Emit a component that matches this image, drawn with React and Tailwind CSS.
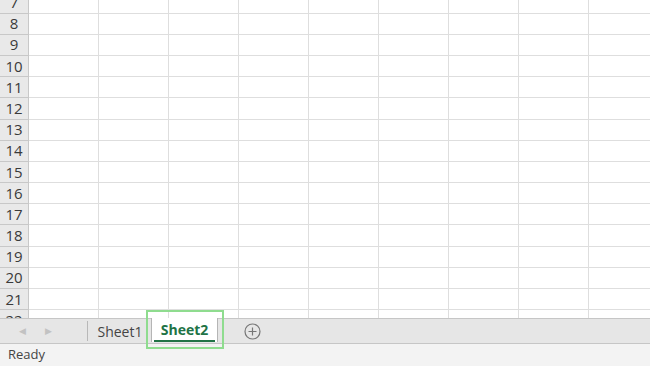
import React from "react";

const rows = [7, 8, 9, 10, 11, 12, 13, 14, 15, 16, 17, 18, 19, 20, 21, 22];
const cols = Array.from({ length: 10 });

export default function App() {
  return (
    <div className="w-[650px] h-[366px] overflow-hidden bg-white flex flex-col" style={{ fontFamily: '"Open Sans", "Noto Sans", sans-serif' }}>
      <div className="h-[318px] overflow-hidden">
        <div className="-mt-[7.6px]">
          {rows.map((r) => (
            <div key={r} className="flex h-[21.2px]">
              <div className="w-[29px] shrink-0 bg-[#e9e9e9] border-r border-b border-[#c8c8c8] flex items-center justify-center text-[15px] text-[#3a3a3a] leading-none">
                {r}
              </div>
              {cols.map((_, i) => (
                <div key={i} className="w-[70px] shrink-0 border-r border-b border-[#dedede]" />
              ))}
            </div>
          ))}
        </div>
      </div>
      <div className="h-[26px] bg-[#e6e6e6] border-t border-b border-[#c6c6c6] flex items-stretch relative">
        <div className="w-[87px] flex items-center text-[#c2c2c2] text-[9px]">
          <span className="ml-[19px]">◀</span>
          <span className="ml-[19px]">▶</span>
        </div>
        <div className="w-px bg-[#b8b8b8] my-[2px]" />
        <div className="w-[63px] flex items-center justify-center text-[14px] text-[#444] pl-[1px]">Sheet1</div>
        <div className="relative w-[67px] -mt-px mb-[1px] bg-white border-l border-r border-[#b5b5b5] flex items-center justify-center pb-[2px]">
          <span className="text-[14px] font-bold text-[#217346]">Sheet2</span>
          <div className="absolute left-[2px] right-[2px] bottom-0 h-[2px] bg-[#217346]" />
        </div>
        <div className="absolute left-[146px] top-[-9px] w-[78px] h-[39px] border-2 border-[#8fdc8f]" />
        <div className="ml-[26px] flex items-center">
          <svg width="17" height="17" viewBox="0 0 17 17">
            <circle cx="8.5" cy="8.5" r="7.5" fill="none" stroke="#777" strokeWidth="1.2" />
            <path d="M8.5 4.5v8M4.5 8.5h8" stroke="#777" strokeWidth="1.2" />
          </svg>
        </div>
      </div>
      <div className="flex-1 bg-[#f3f3f3] flex items-center pl-[8px] text-[13px] text-[#444]">Ready</div>
    </div>
  );
}
